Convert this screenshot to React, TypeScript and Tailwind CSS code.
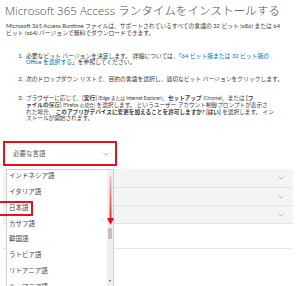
import React from "react";

const JP = { fontFamily: 'Lato, "Noto Sans CJK JP", sans-serif' };
const TITLE = { fontFamily: '"Open Sans", "Noto Sans CJK JP", sans-serif' };

function Chevron({ className }: { className?: string }) {
  return (
    <svg className={className} width="6" height="4" viewBox="0 0 6 4" fill="none">
      <path d="M0.5 0.8 L3 3.2 L5.5 0.8" stroke="#9a9a9a" strokeWidth="0.7" />
    </svg>
  );
}

export default function App() {
  const langs = ["インドネシア語", "イタリア語", "日本語", "カザフ語", "韓国語", "ラトビア語", "リトアニア語", "ルーマニア語"];
  return (
    <div className="w-[300px] h-[286px] overflow-hidden bg-white text-[#3a3a3a]" style={JP}>
      <h1
        className="pl-[5px] pt-[3px] text-[11.6px] leading-[16px] font-light text-[#4a4a4a] whitespace-nowrap"
        style={TITLE}
      >
        Microsoft 365 Access ランタイムをインストールする
      </h1>
      <div className="pl-[6px] mt-[4px] text-[5.8px] leading-[6.8px] whitespace-nowrap">
        <div>Microsoft 365 Access Runtime ファイルは、サポートされているすべての言語の 32 ビット (x86) または 64</div>
        <div>ビット (x64) バージョンで無料でダウンロードできます。</div>
      </div>
      <ol className="mt-[16px] text-[5.8px] leading-[6.8px] whitespace-nowrap">
        <li className="flex">
          <span className="w-[26px] pr-[3px] text-right">1.</span>
          <div>
            <div>
              必要なビット バージョンを決定します。 詳細については、「<span className="text-[#0067b8]">64 ビット版または 32 ビット版の</span>
            </div>
            <div>
              <span className="text-[#0067b8]">Office を選択する</span>」を参照してください。
            </div>
          </div>
        </li>
        <li className="flex mt-[10px]">
          <span className="w-[26px] pr-[3px] text-right">2.</span>
          <div>次のドロップダウン リストで、目的の言語を選択し、適切なビット バージョンをクリックします。</div>
        </li>
        <li className="flex mt-[12px]">
          <span className="w-[26px] pr-[3px] text-right">3.</span>
          <div className="text-[5.65px]">
            <div>
              ブラウザーに応じて、[<b>実行</b>] <span className="text-[4.7px]">(Edge または Internet Explorer)</span>、<b>セットアップ</b> <span className="text-[4.7px]">(Chrome)</span>、または <b>[フ</b>
            </div>
            <div>
              <b>ァイルの</b>保存] <span className="text-[4.7px]">(Firefox の場合)</span> を選択します。 というユーザー アカウント制御プロンプトが表示さ
            </div>
            <div>
              れた場合、 <b>このアプリがデバイスに変更を加えることを許可しますか? [はい]</b> を選択します。 イン
            </div>
            <div>ストールが開始されます。</div>
          </div>
        </li>
      </ol>

      <div className="pl-[3px] mt-[19px]">
        <div className="w-[114px] h-[25px] border-2 border-[#e8101c] bg-white flex items-center justify-between pl-[8px] pr-[6px]">
          <span className="text-[6.5px] text-[#555]">必要な言語</span>
          <Chevron />
        </div>
      </div>

      <div className="relative pl-[3px] pr-[7px]">
        <div className="mt-[3px]">
          {[19, 18, 18].map((h, i) => (
            <div
              key={i}
              className="bg-[#f4f4f4] border-b border-[#e4e4e4] flex items-center justify-end pr-[9px]"
              style={{ height: h }}
            >
              <Chevron />
            </div>
          ))}
          <div className="h-[25px] border-b border-[#e8e8e8]" />
        </div>

        <div className="absolute left-[6px] top-0 w-[108px] h-[118px] bg-white border border-[#cfcfcf] overflow-hidden flex">
          <div className="flex-1 -mt-[2px]">
            {langs.map((l) => (
              <div key={l} className="h-[15.8px] flex items-center pl-[2px] text-[6.5px] text-[#444]">
                {l}
              </div>
            ))}
          </div>
          <div className="w-[6px] h-full bg-[#f0f0f0] relative">
            <div className="absolute left-[1px] right-[1px] top-[58px] h-[11px] bg-[#c1c1c1]" />
            <div className="absolute left-[1.5px] bottom-[4px] w-0 h-0 border-l-[1.5px] border-r-[1.5px] border-t-[2px] border-l-transparent border-r-transparent border-t-[#555]" />
          </div>
        </div>

        <div className="absolute left-[-3px] top-[32px] w-[36px] h-[15px] border-2 border-[#e8101c]" />

        <svg className="absolute left-[106px] top-[7px]" width="9" height="50" viewBox="0 0 9 50">
          <defs>
            <linearGradient id="rg" x1="0" y1="0" x2="0" y2="1">
              <stop offset="0" stopColor="#f7c4c4" />
              <stop offset="1" stopColor="#e8101c" />
            </linearGradient>
          </defs>
          <rect x="3.6" y="0" width="1.8" height="44" fill="url(#rg)" />
          <polygon points="1,42 8,42 4.5,49" fill="#e8101c" />
        </svg>
      </div>
    </div>
  );
}
